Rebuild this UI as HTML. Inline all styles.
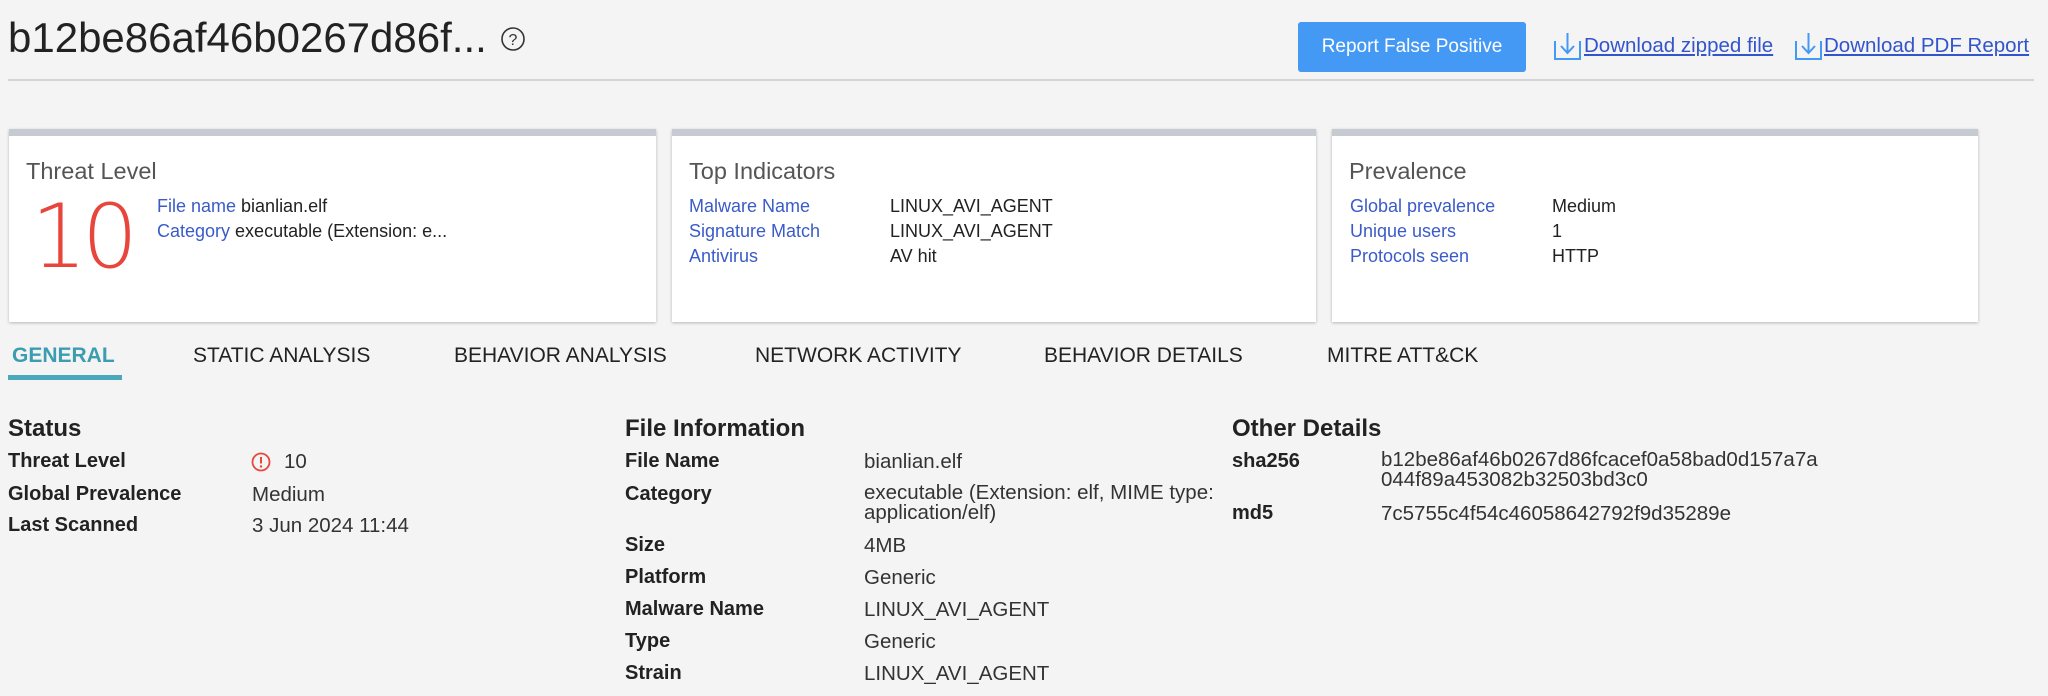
<!DOCTYPE html>
<html><head><meta charset="utf-8"><style>
*{margin:0;padding:0;box-sizing:border-box}
body{width:2048px;height:696px;background:#f4f4f4;font-family:"Liberation Sans",sans-serif;color:#222;position:relative;overflow:hidden}
.a{position:absolute;white-space:nowrap}
.t{font-size:42px;color:#222;left:8px;top:14px}
.line{position:absolute;left:8px;width:2026px;top:79px;height:2px;background:#d4d4d4}
.btn{position:absolute;left:1298px;top:22px;width:228px;height:50px;background:#4499f5;border-radius:3px;color:#fff;font-size:19px;text-align:center;line-height:50px}
.dl{font-size:20.5px;color:#3355cc;text-decoration:underline;top:34px}
.card{position:absolute;top:129px;height:193px;background:#fff;border-top:7px solid #c5cbd0;box-shadow:0 1px 3px rgba(0,0,0,.25)}
.ct{font-size:23.5px;color:#555;top:22px}
.f{font-size:18px}
.lb{color:#3a5bc8}
.tab{font-size:21px;top:344px;color:#222}
.h{font-size:24px;font-weight:bold;top:415px}
.k{font-size:20px;font-weight:bold}
.v{font-size:20.5px;color:#333}
</style></head><body>
<div class="a t">b12be86af46b0267d86f...</div>
<svg class="a" style="left:500px;top:26px" width="26" height="26" viewBox="0 0 26 26"><circle cx="13" cy="13" r="11" fill="none" stroke="#333" stroke-width="1.6"/><text x="13" y="19" font-size="16" text-anchor="middle" fill="#333" font-family="Liberation Sans">?</text></svg>
<div class="line"></div>
<div class="btn">Report False Positive</div>
<svg class="a" style="left:1553px;top:31px" width="29" height="30" viewBox="0 0 29 30"><path d="M2 10V28H27V10" fill="none" stroke="#4499f5" stroke-width="2"/><path d="M14.5 2V22M8 15l6.5 7 6.5-7" fill="none" stroke="#4499f5" stroke-width="2"/></svg>
<div class="a dl" style="left:1584px">Download zipped file</div>
<svg class="a" style="left:1794px;top:31px" width="29" height="30" viewBox="0 0 29 30"><path d="M2 10V28H27V10" fill="none" stroke="#4499f5" stroke-width="2"/><path d="M14.5 2V22M8 15l6.5 7 6.5-7" fill="none" stroke="#4499f5" stroke-width="2"/></svg>
<div class="a dl" style="left:1824px">Download PDF Report</div>

<div class="card" style="left:9px;width:647px">
<div class="a ct" style="left:17px">Threat Level</div>
<div class="a" style="left:22px;top:57px;font-size:88px;color:#e8453c;font-family:'DejaVu Sans',sans-serif;font-weight:200;line-height:1;letter-spacing:-5px">10</div>
<div class="a f" style="left:148px;top:60px"><span class="lb">File name</span> bianlian.elf</div>
<div class="a f" style="left:148px;top:85px"><span class="lb">Category</span> executable (Extension: e...</div>
</div>
<div class="card" style="left:672px;width:644px">
<div class="a ct" style="left:17px">Top Indicators</div>
<div class="a f lb" style="left:17px;top:60px">Malware Name</div><div class="a f" style="left:218px;top:60px">LINUX_AVI_AGENT</div>
<div class="a f lb" style="left:17px;top:85px">Signature Match</div><div class="a f" style="left:218px;top:85px">LINUX_AVI_AGENT</div>
<div class="a f lb" style="left:17px;top:110px">Antivirus</div><div class="a f" style="left:218px;top:110px">AV hit</div>
</div>
<div class="card" style="left:1332px;width:646px">
<div class="a ct" style="left:17px">Prevalence</div>
<div class="a f lb" style="left:18px;top:60px">Global prevalence</div><div class="a f" style="left:220px;top:60px">Medium</div>
<div class="a f lb" style="left:18px;top:85px">Unique users</div><div class="a f" style="left:220px;top:85px">1</div>
<div class="a f lb" style="left:18px;top:110px">Protocols seen</div><div class="a f" style="left:220px;top:110px">HTTP</div>
</div>

<div class="a tab" style="left:12px;color:#3d9db0;font-weight:bold">GENERAL</div>
<div class="a" style="left:8px;top:375px;width:114px;height:5px;background:#4aa8ba"></div>
<div class="a tab" style="left:193px">STATIC ANALYSIS</div>
<div class="a tab" style="left:454px">BEHAVIOR ANALYSIS</div>
<div class="a tab" style="left:755px">NETWORK ACTIVITY</div>
<div class="a tab" style="left:1044px">BEHAVIOR DETAILS</div>
<div class="a tab" style="left:1327px">MITRE ATT&amp;CK</div>

<div class="a h" style="left:8px">Status</div>
<div class="a k" style="left:8px;top:450px">Threat Level</div>
<svg class="a" style="left:251px;top:452px" width="20" height="20" viewBox="0 0 20 20"><circle cx="10" cy="10" r="8.5" fill="none" stroke="#e8453c" stroke-width="1.8"/><path d="M10 5v6.5" stroke="#e8453c" stroke-width="2"/><circle cx="10" cy="14.5" r="1.2" fill="#e8453c"/></svg>
<div class="a v" style="left:284px;top:450px">10</div>
<div class="a k" style="left:8px;top:483px">Global Prevalence</div><div class="a v" style="left:252px;top:483px">Medium</div>
<div class="a k" style="left:8px;top:514px">Last Scanned</div><div class="a v" style="left:252px;top:514px">3 Jun 2024 11:44</div>

<div class="a h" style="left:625px">File Information</div>
<div class="a k" style="left:625px;top:450px">File Name</div><div class="a v" style="left:864px;top:450px">bianlian.elf</div>
<div class="a k" style="left:625px;top:483px">Category</div><div class="a v" style="left:864px;top:483px;line-height:20px">executable (Extension: elf, MIME type:<br>application/elf)</div>
<div class="a k" style="left:625px;top:534px">Size</div><div class="a v" style="left:864px;top:534px">4MB</div>
<div class="a k" style="left:625px;top:566px">Platform</div><div class="a v" style="left:864px;top:566px">Generic</div>
<div class="a k" style="left:625px;top:598px">Malware Name</div><div class="a v" style="left:864px;top:598px">LINUX_AVI_AGENT</div>
<div class="a k" style="left:625px;top:630px">Type</div><div class="a v" style="left:864px;top:630px">Generic</div>
<div class="a k" style="left:625px;top:662px">Strain</div><div class="a v" style="left:864px;top:662px">LINUX_AVI_AGENT</div>

<div class="a h" style="left:1232px">Other Details</div>
<div class="a k" style="left:1232px;top:450px">sha256</div><div class="a v" style="left:1381px;top:450px;line-height:20px">b12be86af46b0267d86fcacef0a58bad0d157a7a<br>044f89a453082b32503bd3c0</div>
<div class="a k" style="left:1232px;top:502px">md5</div><div class="a v" style="left:1381px;top:502px">7c5755c4f54c46058642792f9d35289e</div>
</body></html>
